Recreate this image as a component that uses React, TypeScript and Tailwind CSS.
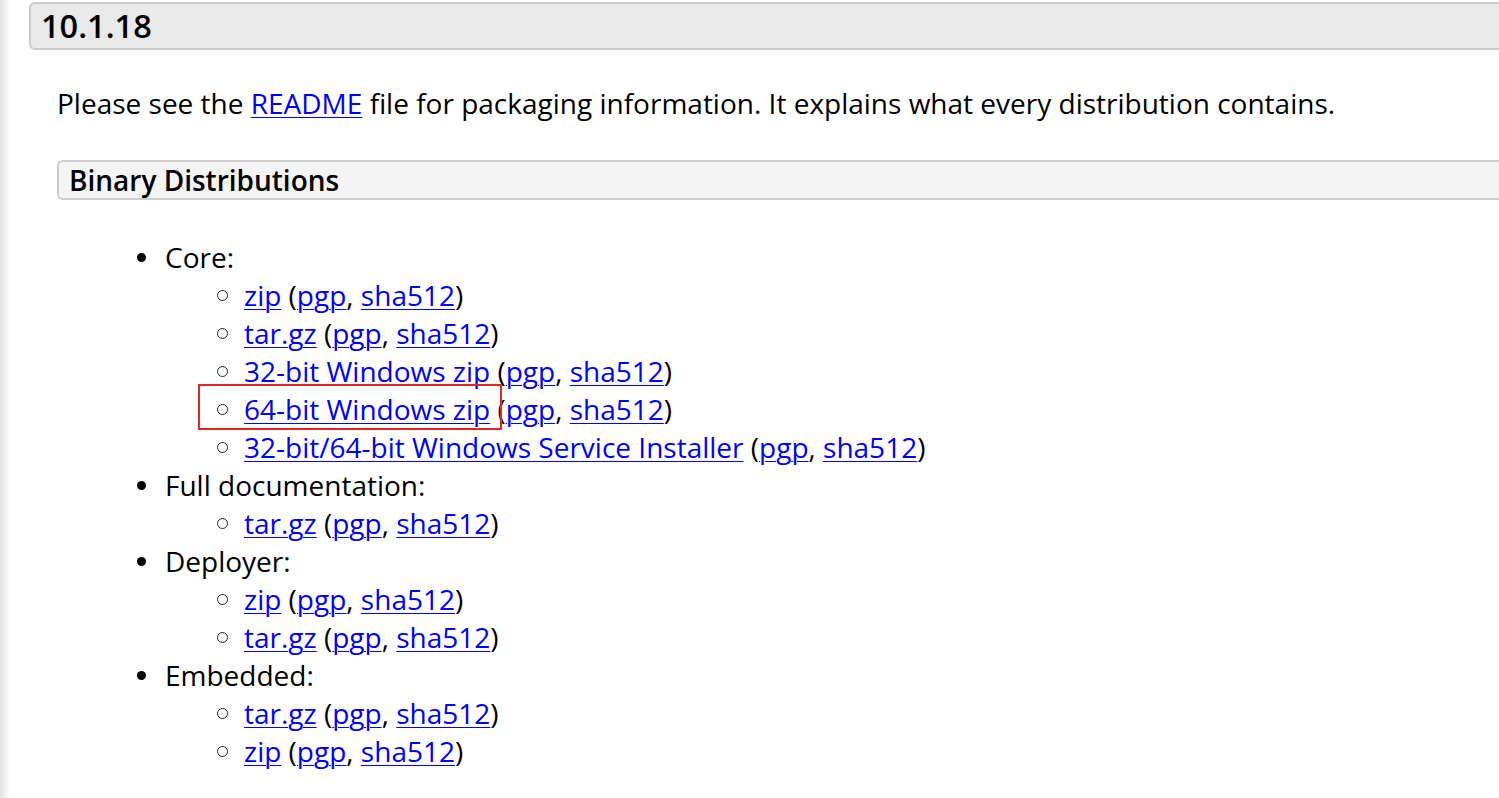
import React from "react";

const A = ({ children }: { children: React.ReactNode }) => (
  <a href="#" className="text-[#0000ff] underline decoration-1 underline-offset-[3px]">
    {children}
  </a>
);

const Sub = ({ name, boxed }: { name: string; boxed?: boolean }) => (
  <li className="relative flex items-center h-[38px]">
    {boxed && (
      <span className="absolute left-[-23px] top-[-6px] w-[304px] h-[46px] border-2 border-[#e02626] pointer-events-none" />
    )}
    <span className="w-[23px] shrink-0 flex items-center">
      <span className="block w-[11px] h-[11px] rounded-full border-[1.5px] border-[#2a2a2a] ml-[-4px]" />
    </span>
    <span>
      <A>{name}</A> (<A>pgp</A>, <A>sha512</A>)
    </span>
  </li>
);

const Top = ({ label, children }: { label: string; children: React.ReactNode }) => (
  <li>
    <div className="flex items-center h-[38px]">
      <span className="w-[24px] shrink-0 flex items-center">
        <span className="block w-[9px] h-[9px] rounded-full bg-black ml-[-4px]" />
      </span>
      <span>{label}</span>
    </div>
    <ul className="pl-[80px]">{children}</ul>
  </li>
);

export default function App() {
  return (
    <div
      className="flex min-h-[798px] bg-white text-black overflow-hidden"
      style={{ fontFamily: '"Open Sans", "Noto Sans", sans-serif' }}
    >
      <div className="w-[10px] shrink-0 bg-gradient-to-r from-[#e2e2e2] to-white" />
      <div className="flex-1 pl-[19px] pt-[2px] text-[28px] leading-[38px]">
        <div className="h-[48px] mr-[-20px] rounded-[6px] border-2 border-[#cccccc] bg-[#e9e9e9] pl-[10px] flex items-center">
          <h3 className="text-[32.5px] font-semibold leading-[44px]">10.1.18</h3>
        </div>
        <div className="pl-[28px]">
          <p className="mt-[34px] mb-[38px] h-[38px]">
            Please see the <A>README</A> file for packaging information. It explains what every distribution contains.
          </p>
          <div className="h-[40px] mr-[-20px] rounded-[6px] border-2 border-[#cccccc] bg-[#f4f4f4] pl-[10px] flex items-center">
            <h4 className="text-[28px] font-semibold leading-[36px]">Binary Distributions</h4>
          </div>
          <ul className="mt-[38px] pl-[84px]">
            <Top label="Core:">
              <Sub name="zip" />
              <Sub name="tar.gz" />
              <Sub name="32-bit Windows zip" />
              <Sub name="64-bit Windows zip" boxed />
              <Sub name="32-bit/64-bit Windows Service Installer" />
            </Top>
            <Top label="Full documentation:">
              <Sub name="tar.gz" />
            </Top>
            <Top label="Deployer:">
              <Sub name="zip" />
              <Sub name="tar.gz" />
            </Top>
            <Top label="Embedded:">
              <Sub name="tar.gz" />
              <Sub name="zip" />
            </Top>
          </ul>
        </div>
      </div>
    </div>
  );
}
